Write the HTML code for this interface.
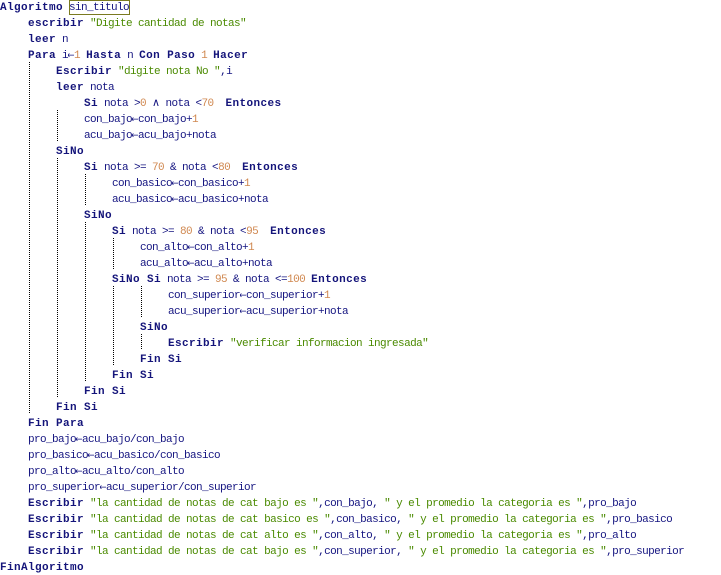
<!DOCTYPE html>
<html><head><meta charset="utf-8"><style>
html,body{margin:0;padding:0;background:#fff;width:721px;height:575px;overflow:hidden;position:relative}
.l{position:absolute;height:16px;line-height:16px;white-space:pre;font-family:"Liberation Mono",monospace;font-size:11px;letter-spacing:-0.6px;color:#141480}
.k{font-weight:bold;letter-spacing:0.4px;color:#14147a}
.s{color:#4a8a00}
.n{color:#d08850}
.a{display:inline-block;width:6px;overflow:hidden;vertical-align:top;font-family:"DejaVu Sans",sans-serif;font-size:9px;letter-spacing:0;text-indent:-1px}
.g{position:absolute;width:1px;background:repeating-linear-gradient(to bottom,#000 0,#000 1px,transparent 1px,transparent 2px)}
.box{position:absolute;left:69px;top:0px;width:59px;height:13px;border:1px solid #7a7a20}
</style></head><body>
<div class="box"></div>
<div class="g" style="left:29px;top:62px;height:352px"></div>
<div class="g" style="left:57px;top:110px;height:32px"></div>
<div class="g" style="left:57px;top:158px;height:240px"></div>
<div class="g" style="left:85px;top:174px;height:32px"></div>
<div class="g" style="left:85px;top:222px;height:160px"></div>
<div class="g" style="left:113px;top:238px;height:32px"></div>
<div class="g" style="left:113px;top:286px;height:80px"></div>
<div class="g" style="left:141px;top:286px;height:32px"></div>
<div class="g" style="left:141px;top:334px;height:16px"></div>

<div class="l" style="top:0px;left:0"><span class="k">Algoritmo</span> sin_titulo</div>
<div class="l" style="top:16px;left:28px"><span class="k">escribir</span> <span class="s">"Digite cantidad de notas"</span></div>
<div class="l" style="top:32px;left:28px"><span class="k">leer</span> n</div>
<div class="l" style="top:48px;left:28px"><span class="k">Para</span> i<span class="a">←</span><span class="n">1</span> <span class="k">Hasta</span> n <span class="k">Con Paso</span> <span class="n">1</span> <span class="k">Hacer</span></div>
<div class="l" style="top:64px;left:56px"><span class="k">Escribir</span> <span class="s">"digite nota No "</span>,i</div>
<div class="l" style="top:80px;left:56px"><span class="k">leer</span> nota</div>
<div class="l" style="top:96px;left:84px"><span class="k">Si</span> nota &gt;<span class="n">0</span> ∧ nota &lt;<span class="n">70</span>  <span class="k">Entonces</span></div>
<div class="l" style="top:112px;left:84px">con_bajo<span class="a">←</span>con_bajo+<span class="n">1</span></div>
<div class="l" style="top:128px;left:84px">acu_bajo<span class="a">←</span>acu_bajo+nota</div>
<div class="l" style="top:144px;left:56px"><span class="k">SiNo</span></div>
<div class="l" style="top:160px;left:84px"><span class="k">Si</span> nota &gt;= <span class="n">70</span> &amp; nota &lt;<span class="n">80</span>  <span class="k">Entonces</span></div>
<div class="l" style="top:176px;left:112px">con_basico<span class="a">←</span>con_basico+<span class="n">1</span></div>
<div class="l" style="top:192px;left:112px">acu_basico<span class="a">←</span>acu_basico+nota</div>
<div class="l" style="top:208px;left:84px"><span class="k">SiNo</span></div>
<div class="l" style="top:224px;left:112px"><span class="k">Si</span> nota &gt;= <span class="n">80</span> &amp; nota &lt;<span class="n">95</span>  <span class="k">Entonces</span></div>
<div class="l" style="top:240px;left:140px">con_alto<span class="a">←</span>con_alto+<span class="n">1</span></div>
<div class="l" style="top:256px;left:140px">acu_alto<span class="a">←</span>acu_alto+nota</div>
<div class="l" style="top:272px;left:112px"><span class="k">SiNo Si</span> nota &gt;= <span class="n">95</span> &amp; nota &lt;=<span class="n">100</span> <span class="k">Entonces</span></div>
<div class="l" style="top:288px;left:168px">con_superior<span class="a">←</span>con_superior+<span class="n">1</span></div>
<div class="l" style="top:304px;left:168px">acu_superior<span class="a">←</span>acu_superior+nota</div>
<div class="l" style="top:320px;left:140px"><span class="k">SiNo</span></div>
<div class="l" style="top:336px;left:168px"><span class="k">Escribir</span> <span class="s">"verificar informacion ingresada"</span></div>
<div class="l" style="top:352px;left:140px"><span class="k">Fin Si</span></div>
<div class="l" style="top:368px;left:112px"><span class="k">Fin Si</span></div>
<div class="l" style="top:384px;left:84px"><span class="k">Fin Si</span></div>
<div class="l" style="top:400px;left:56px"><span class="k">Fin Si</span></div>
<div class="l" style="top:416px;left:28px"><span class="k">Fin Para</span></div>
<div class="l" style="top:432px;left:28px">pro_bajo<span class="a">←</span>acu_bajo/con_bajo</div>
<div class="l" style="top:448px;left:28px">pro_basico<span class="a">←</span>acu_basico/con_basico</div>
<div class="l" style="top:464px;left:28px">pro_alto<span class="a">←</span>acu_alto/con_alto</div>
<div class="l" style="top:480px;left:28px">pro_superior<span class="a">←</span>acu_superior/con_superior</div>
<div class="l" style="top:496px;left:28px"><span class="k">Escribir</span> <span class="s">"la cantidad de notas de cat bajo es "</span>,con_bajo, <span class="s">" y el promedio la categoria es "</span>,pro_bajo</div>
<div class="l" style="top:512px;left:28px"><span class="k">Escribir</span> <span class="s">"la cantidad de notas de cat basico es "</span>,con_basico, <span class="s">" y el promedio la categoria es "</span>,pro_basico</div>
<div class="l" style="top:528px;left:28px"><span class="k">Escribir</span> <span class="s">"la cantidad de notas de cat alto es "</span>,con_alto, <span class="s">" y el promedio la categoria es "</span>,pro_alto</div>
<div class="l" style="top:544px;left:28px"><span class="k">Escribir</span> <span class="s">"la cantidad de notas de cat bajo es "</span>,con_superior, <span class="s">" y el promedio la categoria es "</span>,pro_superior</div>
<div class="l" style="top:560px;left:0"><span class="k">FinAlgoritmo</span></div>
</body></html>
